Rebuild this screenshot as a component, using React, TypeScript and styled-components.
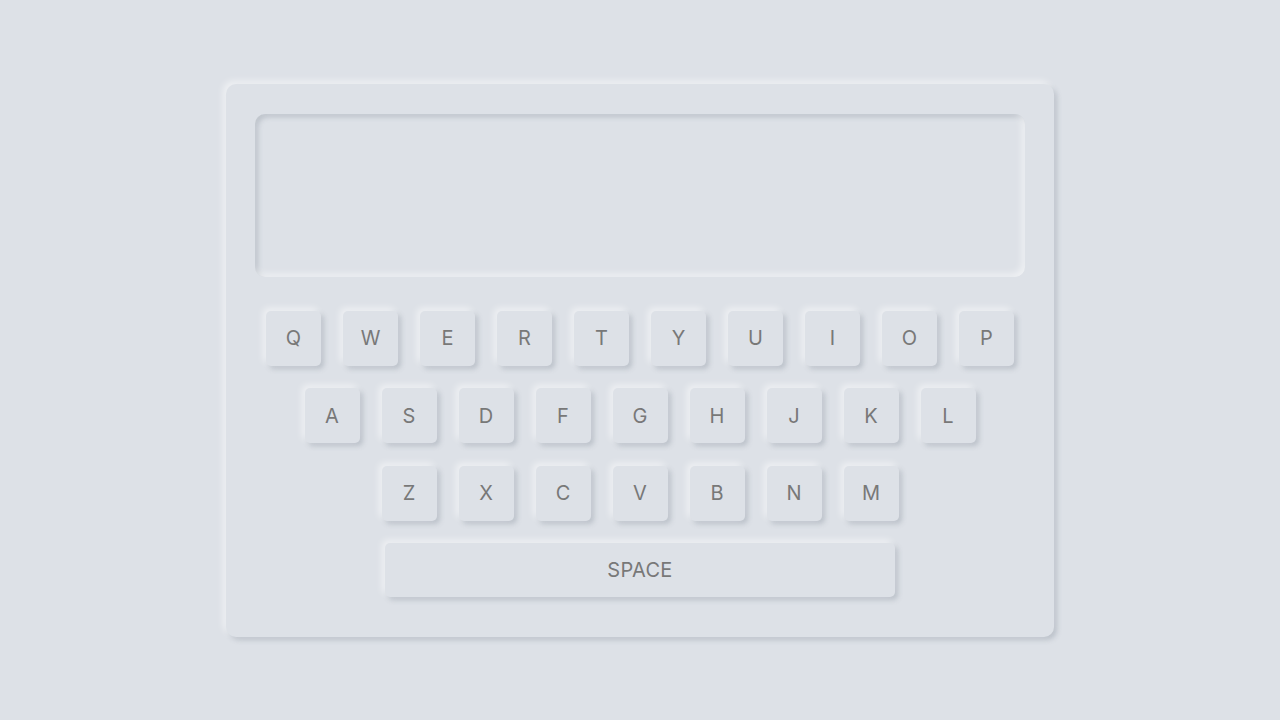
import React from 'react';
import styled, { createGlobalStyle } from 'styled-components';

const ROWS = [
  ['Q', 'W', 'E', 'R', 'T', 'Y', 'U', 'I', 'O', 'P'],
  ['A', 'S', 'D', 'F', 'G', 'H', 'J', 'K', 'L'],
  ['Z', 'X', 'C', 'V', 'B', 'N', 'M'],
];

const GlobalStyle = createGlobalStyle`
  * {
    box-sizing: border-box;
  }

  body {
    margin: 0;
    background: #dde1e7;
    font-family: 'Inter', 'Open Sans', sans-serif;
  }
`;

export default function App() {
  return (
    <>
      <GlobalStyle />
      <Page>
        <Keyboard>
          <Display />
          <KeyRows>
            {ROWS.map((row) => (
              <KeyRow key={row[0]}>
                {row.map((letter) => (
                  <Key key={letter}>{letter}</Key>
                ))}
              </KeyRow>
            ))}
            <KeyRow>
              <SpaceKey>SPACE</SpaceKey>
            </KeyRow>
          </KeyRows>
        </Keyboard>
      </Page>
    </>
  );
}

const raised = `
  box-shadow: -3px -3px 7px rgba(255, 255, 255, 0.55),
    3px 3px 5px rgba(94, 104, 121, 0.26);
`;

const Page = styled.div`
  min-height: 100vh;
  display: flex;
  align-items: center;
  justify-content: center;
`;

const Keyboard = styled.div`
  width: 828px;
  padding: 30px 29px 39.5px;
  background: #dde1e7;
  border-radius: 10px;
  ${raised}
`;

const Display = styled.div`
  height: 163px;
  border-radius: 10px;
  background: #dde1e7;
  margin-bottom: 34px;
  box-shadow: inset -3px -3px 7px rgba(255, 255, 255, 0.55),
    inset 3px 3px 5px rgba(94, 104, 121, 0.26);
`;

const KeyRows = styled.div`
  display: flex;
  flex-direction: column;
  gap: 22.5px;
`;

const KeyRow = styled.div`
  display: flex;
  justify-content: center;
  gap: 22px;
`;

const Key = styled.div`
  width: 55px;
  height: 55px;
  border-radius: 5px;
  background: #dde1e7;
  display: flex;
  align-items: center;
  justify-content: center;
  font-size: 20px;
  font-weight: 400;
  color: #787878;
  ${raised}
`;

const SpaceKey = styled(Key)`
  width: 510px;
  height: 54px;
  letter-spacing: 0.3px;
`;
